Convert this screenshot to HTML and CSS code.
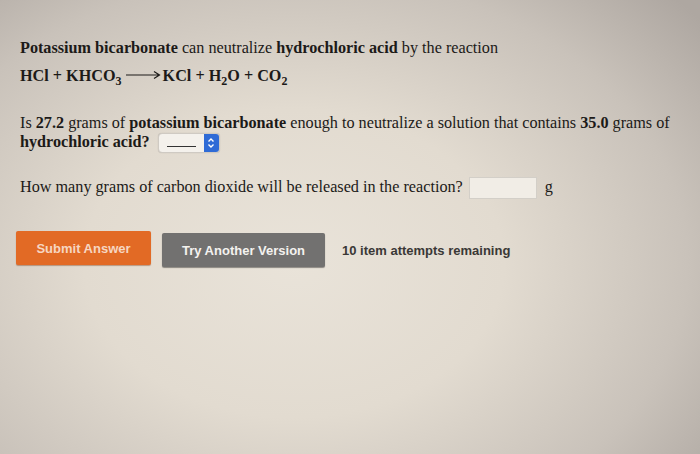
FILE: index.html
```html
<!DOCTYPE html>
<html lang="en">
<head>
  <meta charset="UTF-8">
  <title>Question</title>
  <link rel="stylesheet" href="styles.css">
</head>
<body>
  <div class="question">
    <p class="intro"><b>Potassium bicarbonate</b> can neutralize <b>hydrochloric acid</b> by the reaction</p>
    <p class="equation">HCl + KHCO<sub>3</sub><svg class="arrow" width="36" height="10" viewBox="0 0 36 10"><path d="M1 5 H34 M29 1.5 L34.5 5 L29 8.5" fill="none" stroke="#1c1a18" stroke-width="1.2"/></svg>KCl + H<sub>2</sub>O + CO<sub>2</sub></p>

    <p class="part">Is <b>27.2</b> grams of <b>potassium bicarbonate</b> enough to neutralize a solution that contains <b>35.0</b> grams of
      <b>hydrochloric acid?</b>
      <span class="select">
        <span class="blank"></span>
        <span class="stepper">
          <svg width="8" height="12" viewBox="0 0 8 12"><path d="M1.5 4.5 L4 2 L6.5 4.5 M1.5 7.5 L4 10 L6.5 7.5" fill="none" stroke="#fff" stroke-width="1.4"/></svg>
        </span>
      </span>
    </p>

    <p class="part">How many grams of carbon dioxide will be released in the reaction? <span class="answer"></span> <span class="unit">g</span></p>
  </div>

  <div class="actions">
    <button class="btn submit">Submit Answer</button>
    <button class="btn another">Try Another Version</button>
    <span class="attempts">10 item attempts remaining</span>
  </div>
</body>
</html>
```

FILE: styles.css
```css
html {
  height: 100%;
}

body {
  margin: 0;
  height: 100%;
  font-family: 'Liberation Serif', 'Times New Roman', serif;
  font-size: 16.2px;
  color: #1c1a18;
  background: radial-gradient(ellipse 75% 85% at 42% 58%, #e9e3d9 0%, #e2dbd0 40%, #c9c2ba 75%, #aea7a1 100%);
}

.question {
  padding: 38px 20px 0 20px;
}

p {
  margin: 0;
}

.intro {
  line-height: 20px;
}

.equation {
  margin-top: 8px;
  font-weight: bold;
  line-height: 20px;
}

.equation sub {
  font-size: 12px;
  line-height: 0;
}

.arrow {
  margin: 0 2px 0 3px;
  vertical-align: 1px;
}

.part {
  margin-top: 28px;
  line-height: 19px;
  width: 670px;
}

.part + .part {
  margin-top: 24px;
}

.select {
  display: inline-flex;
  align-items: center;
  vertical-align: middle;
  width: 60px;
  height: 18px;
  margin-left: 4px;
  border: 1px solid #cfcac3;
  border-radius: 4px;
  background: #f4f1ec;
  box-shadow: 0 0 1px rgba(0, 0, 0, 0.2);
}

.blank {
  flex: 1;
  height: 1px;
  margin: 6px 8px 0 8px;
  background: #333;
}

.stepper {
  display: flex;
  align-items: center;
  justify-content: center;
  width: 15px;
  height: 18px;
  border-radius: 0 3px 3px 0;
  background: #2f6bd6;
}

.answer {
  display: inline-block;
  vertical-align: middle;
  width: 66px;
  height: 20px;
  margin-left: 2px;
  border: 1px solid #d3cfc8;
  background: #f1ede6;
}

.unit {
  margin-left: 4px;
}

.actions {
  display: flex;
  align-items: flex-start;
  padding: 32px 16px 0 16px;
}

.btn {
  font-family: 'Liberation Sans', Arial, sans-serif;
  font-size: 13px;
  font-weight: bold;
  height: 34px;
  border: none;
  border-radius: 2px;
  padding: 0;
  white-space: nowrap;
}

.submit {
  width: 135px;
  background: #e26a25;
  color: #f6d6c2;
  box-shadow: 0 1px 1px rgba(120, 50, 10, 0.4);
}

.another {
  width: 163px;
  margin-left: 11px;
  margin-top: 2px;
  background: #727170;
  color: #f4f2ef;
  box-shadow: 0 1px 1px rgba(0, 0, 0, 0.4);
}

.attempts {
  margin-left: 17px;
  margin-top: 12px;
  font-family: 'Liberation Sans', Arial, sans-serif;
  font-size: 13px;
  font-weight: bold;
  color: #3a3836;
}
```
